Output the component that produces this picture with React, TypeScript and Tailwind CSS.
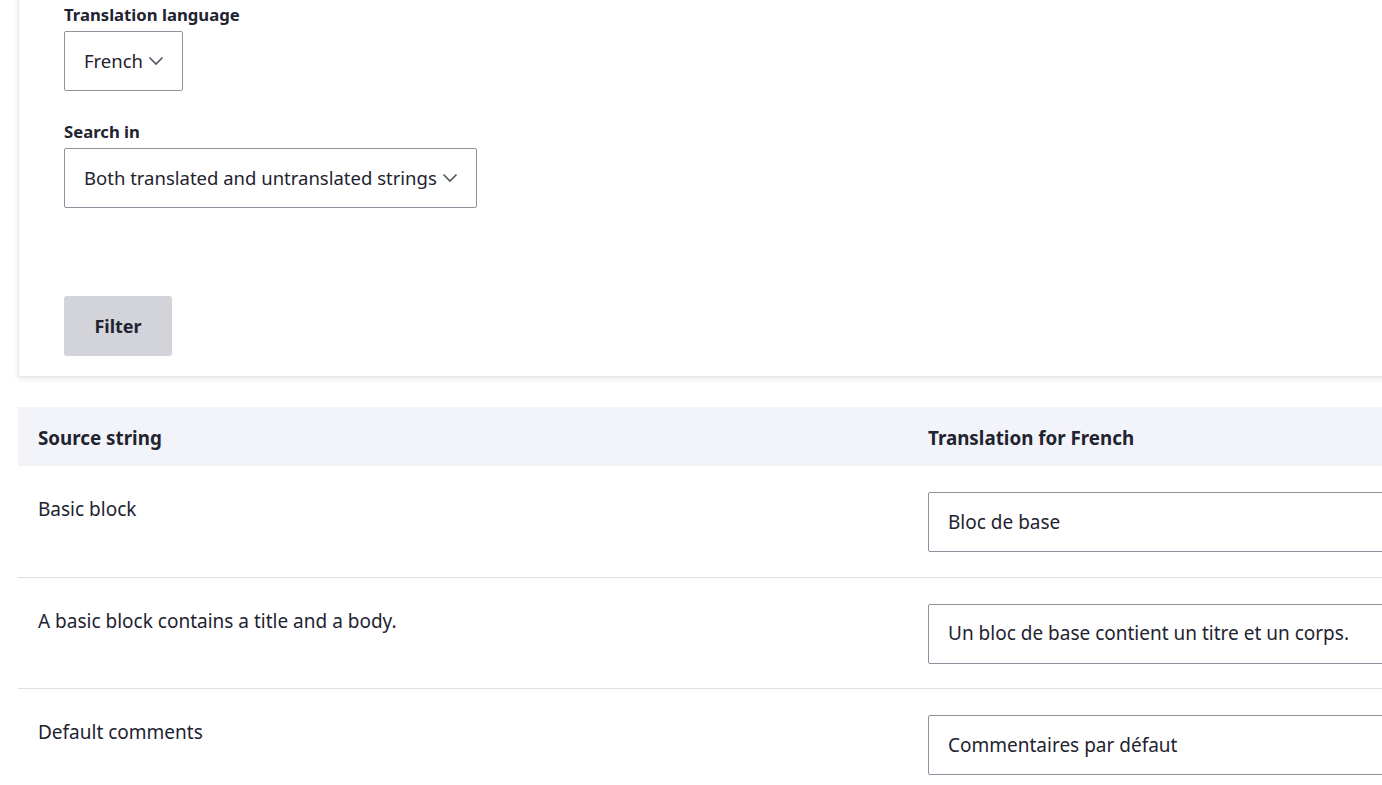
import { ReactNode } from "react";

type Row = {
  source: string;
  translation: string;
};

const rows: Row[] = [
  { source: "Basic block", translation: "Bloc de base" },
  {
    source: "A basic block contains a title and a body.",
    translation: "Un bloc de base contient un titre et un corps.",
  },
  { source: "Default comments", translation: "Commentaires par défaut" },
];

const Chevron = () => (
  <svg width="16" height="10" viewBox="0 0 16 10" fill="none" className="ml-[5px] shrink-0">
    <path d="M1.5 1.5 L8 8 L14.5 1.5" stroke="#545560" strokeWidth="1.6" />
  </svg>
);

const Field = ({ label, children }: { label: string; children: ReactNode }) => (
  <div className="flex flex-col">
    <label className="text-[16.7px] font-bold leading-[22px] text-[#222330] mb-[5px]">{label}</label>
    {children}
  </div>
);

const Select = ({ value }: { value: string }) => (
  <div className="flex h-[60px] w-fit items-center rounded-[2px] border border-[#8e929c] bg-white pl-[19px] pr-[18px] text-[18.5px] text-[#222330]">
    <span>{value}</span>
    <Chevron />
  </div>
);

export default function App() {
  return (
    <div className="h-[785px] w-[1382px] overflow-hidden bg-white font-['Noto_Sans',sans-serif] text-[#222330]">
      <div className="ml-[18px] w-[1420px]">
        <div className="-mt-[6px] rounded-[2px] border border-[#e6e7ec] bg-white pt-[9px] pb-[20px] pl-[45px] shadow-[0_2px_6px_rgba(0,0,0,0.1)]">
          <Field label="Translation language">
            <Select value="French" />
          </Field>
          <div className="mt-[30px]">
            <Field label="Search in">
              <Select value="Both translated and untranslated strings" />
            </Field>
          </div>
          <button className="mt-[88px] h-[60px] w-[108px] rounded-[3px] bg-[#d3d4d9] text-[18px] font-bold text-[#222330]">
            Filter
          </button>
        </div>

        <table className="mt-[30px] w-full border-collapse text-left">
          <thead>
            <tr className="h-[59px] bg-[#f3f4f9]">
              <th className="w-[890px] px-[20px] pt-[3px] text-[18.8px] font-bold">Source string</th>
              <th className="px-[20px] pt-[3px] text-[18.8px] font-bold">Translation for French</th>
            </tr>
          </thead>
          <tbody>
            {rows.map((row) => (
              <tr key={row.source} className="border-b border-[#dedfe4] align-top">
                <td className="px-[20px] pt-[29px] text-[19px] leading-[28px]">{row.source}</td>
                <td className="px-[20px] pt-[26px] pb-[24.5px]">
                  <div className="flex h-[60px] items-center rounded-[2px] border border-[#8e929c] bg-white px-[19px] text-[19px]">
                    {row.translation}
                  </div>
                </td>
              </tr>
            ))}
          </tbody>
        </table>
      </div>
    </div>
  );
}
